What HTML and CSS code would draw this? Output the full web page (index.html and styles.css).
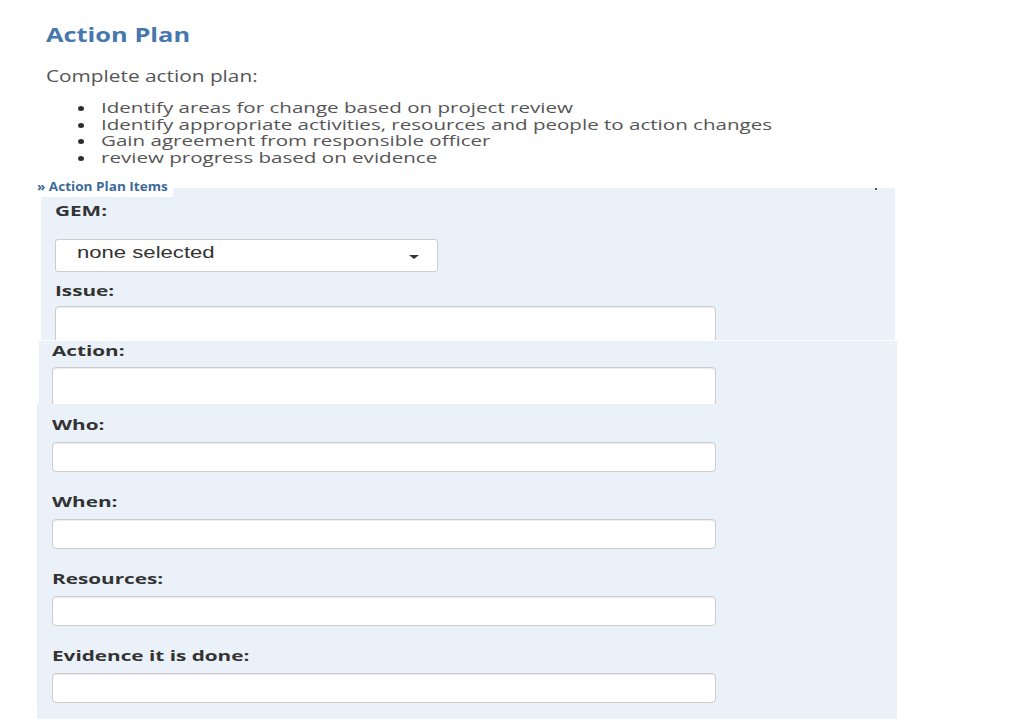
FILE: index.html
```html
<!DOCTYPE html>
<html lang="en">
<head>
<meta charset="utf-8">
<title>Action Plan</title>
<link rel="stylesheet" href="styles.css">
</head>
<body>
<div class="page">
  <h1 class="title"><span class="sx">Action Plan</span></h1>
  <p class="intro"><span class="sx">Complete action plan:</span></p>
  <ul class="steps">
    <li><span class="sx">Identify areas for change based on project review</span></li>
    <li><span class="sx">Identify appropriate activities, resources and people to action changes</span></li>
    <li><span class="sx">Gain agreement from responsible officer</span></li>
    <li><span class="sx">review progress based on evidence</span></li>
  </ul>

  <div class="items">
    <div class="legend"><span class="sx">» Action Plan Items</span></div>

    <div class="seg seg1">
      <span class="dot"></span>
      <div class="label"><span class="sx">GEM:</span></div>
      <div class="select">
        <span class="select-text"><span class="sx">none selected</span></span>
        <span class="caret"></span>
      </div>
      <div class="label label-issue"><span class="sx">Issue:</span></div>
      <div class="input input-issue"></div>
    </div>

    <div class="seg seg2">
      <div class="label"><span class="sx">Action:</span></div>
      <div class="input input-action"></div>
    </div>

    <div class="seg seg3">
      <div class="field">
        <div class="label"><span class="sx">Who:</span></div>
        <div class="input"></div>
      </div>
      <div class="field">
        <div class="label"><span class="sx">When:</span></div>
        <div class="input"></div>
      </div>
      <div class="field">
        <div class="label"><span class="sx">Resources:</span></div>
        <div class="input"></div>
      </div>
      <div class="field">
        <div class="label"><span class="sx">Evidence it is done:</span></div>
        <div class="input"></div>
      </div>
    </div>
  </div>
</div>
</body>
</html>
```

FILE: styles.css
```css
html, body {
  margin: 0;
  padding: 0;
  background: #ffffff;
}

body {
  font-family: "Open Sans", "DejaVu Sans", sans-serif;
  color: #555555;
  width: 1024px;
  height: 724px;
  overflow: hidden;
}

.sx {
  display: inline-block;
  transform: scaleX(1.3);
  transform-origin: 0 50%;
  white-space: nowrap;
}

.page {
  padding-top: 21px;
}

.title {
  margin: 0 0 0 46px;
  font-size: 20px;
  line-height: 28px;
  font-weight: 700;
  color: #4677ae;
}

.title .sx {
  transform: scaleX(1.27);
}

.intro {
  margin: 16px 0 0 46px;
  font-size: 16px;
  line-height: 22px;
  color: #555555;
}

.steps {
  list-style: none;
  margin: 12px 0 0 46px;
  padding-left: 55px;
  font-size: 15px;
  line-height: 16.5px;
  color: #555555;
}

.steps li {
  position: relative;
}

.steps li::before {
  content: "";
  position: absolute;
  left: -23px;
  top: 7px;
  width: 6px;
  height: 5px;
  border-radius: 50%;
  background: #2e2e2e;
}

.steps .sx {
  transform: scaleX(1.37);
}

.items {
  position: relative;
  margin-top: 23px;
}

.legend {
  position: absolute;
  top: -12px;
  left: 33px;
  width: 136px;
  height: 21px;
  padding-left: 4px;
  background: #ffffff;
  font-size: 12px;
  line-height: 21px;
  font-weight: 700;
  color: #3c6a9b;
  z-index: 2;
}

.legend .sx {
  transform: scaleX(1.13);
}

.seg {
  background: #eaf1f8;
  box-sizing: border-box;
  overflow: hidden;
}

.seg1 {
  position: relative;
  margin-left: 41px;
  width: 854px;
  height: 152px;
  padding: 13px 0 0 14px;
}

.dot {
  position: absolute;
  left: 834px;
  top: 0;
  width: 2px;
  height: 2px;
  background: #555555;
}

.seg2 {
  margin-left: 39px;
  margin-top: 1px;
  width: 858px;
  height: 63px;
  padding: 0 0 0 13px;
}

.seg3 {
  margin-left: 37px;
  width: 860px;
  padding: 11px 0 16px 15px;
}

.label {
  font-size: 14px;
  line-height: 20px;
  font-weight: 700;
  color: #333333;
}

.label .sx {
  transform: scaleX(1.48);
}

.select {
  display: flex;
  align-items: flex-start;
  box-sizing: border-box;
  width: 383px;
  height: 33px;
  margin-top: 18px;
  padding: 3px 18px 0 21px;
  background: #ffffff;
  border: 1px solid #cccccc;
  border-radius: 3px;
}

.select-text {
  font-family: "Liberation Sans", Arial, sans-serif;
  font-size: 17px;
  line-height: 19px;
  color: #333333;
}

.caret {
  margin-left: auto;
  margin-top: 12px;
  width: 0;
  height: 0;
  border-top: 4px solid #333333;
  border-left: 5px solid transparent;
  border-right: 5px solid transparent;
}

.label-issue {
  margin-top: 9px;
}

.input {
  box-sizing: border-box;
  width: 664px;
  height: 30px;
  margin-top: 7px;
  background: #ffffff;
  border: 1px solid #cccccc;
  border-radius: 4px;
  box-shadow: inset 0 1px 1px rgba(0, 0, 0, 0.075);
}

.input-issue {
  width: 661px;
  height: 40px;
  margin-top: 5px;
}

.input-action {
  height: 45px;
  margin-top: 6px;
}

.field + .field {
  margin-top: 20px;
}
```
